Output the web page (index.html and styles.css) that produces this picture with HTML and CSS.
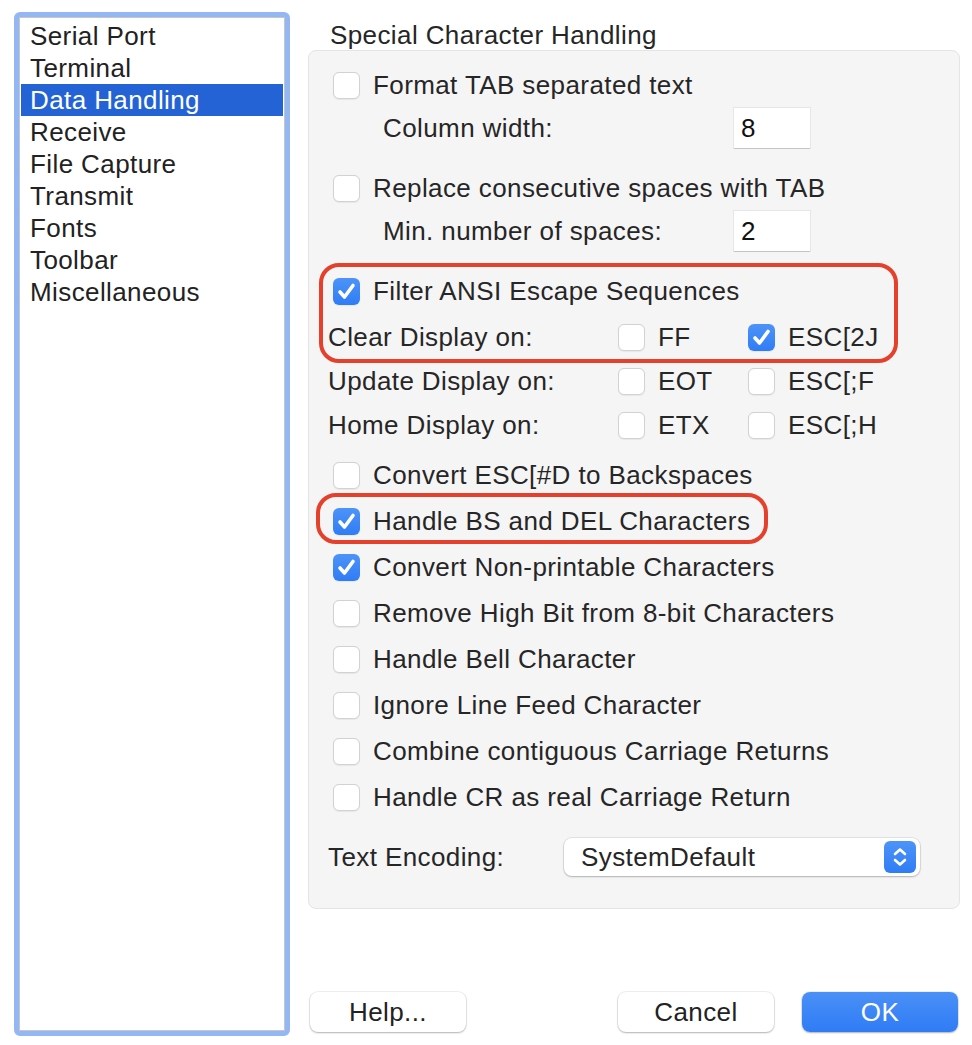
FILE: index.html
```html
<!DOCTYPE html>
<html lang="en">
<head>
    <meta charset="UTF-8">
    <meta name="viewport" content="width=device-width, initial-scale=1.0">
    <title>Settings - Data Handling</title>
    <link rel="stylesheet" href="styles.css">
</head>
<body>

<div class="window">
    <!-- Category list on the left -->
    <div class="category-list">
        <ul>
            <li>Serial Port</li>
            <li>Terminal</li>
            <li class="selected">Data Handling</li>
            <li>Receive</li>
            <li>File Capture</li>
            <li>Transmit</li>
            <li>Fonts</li>
            <li>Toolbar</li>
            <li>Miscellaneous</li>
        </ul>
    </div>

    <!-- Settings for the selected category -->
    <div class="settings">
        <div class="section-title">Special Character Handling</div>

        <div class="panel">
            <div class="row">
                <span class="checkbox"></span>
                <span class="label">Format TAB separated text</span>
            </div>
            <div class="row field-row">
                <span class="field-label">Column width:</span>
                <span class="text-field">8</span>
            </div>

            <div class="row group-start">
                <span class="checkbox"></span>
                <span class="label">Replace consecutive spaces with TAB</span>
            </div>
            <div class="row field-row">
                <span class="field-label">Min. number of spaces:</span>
                <span class="text-field">2</span>
            </div>

            <div class="row group-start">
                <span class="checkbox checked"><svg viewBox="0 0 27 27"><path d="M7 14 L11.5 19 L20 7.5"/></svg></span>
                <span class="label">Filter ANSI Escape Sequences</span>
            </div>
            <div class="row display-row first-display">
                <span class="display-label">Clear Display on:</span>
                <span class="option"><span class="checkbox"></span>FF</span>
                <span class="option"><span class="checkbox checked"><svg viewBox="0 0 27 27"><path d="M7 14 L11.5 19 L20 7.5"/></svg></span>ESC[2J</span>
            </div>
            <div class="row display-row">
                <span class="display-label">Update Display on:</span>
                <span class="option"><span class="checkbox"></span>EOT</span>
                <span class="option"><span class="checkbox"></span>ESC[;F</span>
            </div>
            <div class="row display-row">
                <span class="display-label">Home Display on:</span>
                <span class="option"><span class="checkbox"></span>ETX</span>
                <span class="option"><span class="checkbox"></span>ESC[;H</span>
            </div>

            <div class="row after-display">
                <span class="checkbox"></span>
                <span class="label">Convert ESC[#D to Backspaces</span>
            </div>
            <div class="row">
                <span class="checkbox checked"><svg viewBox="0 0 27 27"><path d="M7 14 L11.5 19 L20 7.5"/></svg></span>
                <span class="label">Handle BS and DEL Characters</span>
            </div>
            <div class="row">
                <span class="checkbox checked"><svg viewBox="0 0 27 27"><path d="M7 14 L11.5 19 L20 7.5"/></svg></span>
                <span class="label">Convert Non-printable Characters</span>
            </div>
            <div class="row">
                <span class="checkbox"></span>
                <span class="label">Remove High Bit from 8-bit Characters</span>
            </div>
            <div class="row">
                <span class="checkbox"></span>
                <span class="label">Handle Bell Character</span>
            </div>
            <div class="row">
                <span class="checkbox"></span>
                <span class="label">Ignore Line Feed Character</span>
            </div>
            <div class="row">
                <span class="checkbox"></span>
                <span class="label">Combine contiguous Carriage Returns</span>
            </div>
            <div class="row">
                <span class="checkbox"></span>
                <span class="label">Handle CR as real Carriage Return</span>
            </div>

            <div class="row group-start">
                <span class="display-label encoding-label">Text Encoding:</span>
                <div class="popup">
                    <span>SystemDefault</span>
                    <span class="stepper">
                        <svg viewBox="0 0 32 32"><path d="M11 13 L16 8.5 L21 13 M11 19 L16 23.5 L21 19"/></svg>
                    </span>
                </div>
            </div>

            <!-- red outlines drawn over the options -->
            <div class="callout callout-ansi"></div>
            <div class="callout callout-bs"></div>
        </div>

        <div class="buttons">
            <button class="btn">Help...</button>
            <div class="btn-group">
                <button class="btn">Cancel</button>
                <button class="btn btn-default">OK</button>
            </div>
        </div>
    </div>
</div>

</body>
</html>
```

FILE: styles.css
```css
body {
    margin: 0;
    padding: 0;
    background-color: #fff;
    font-family: "Liberation Sans", Arial, sans-serif;
    font-size: 26px;
    letter-spacing: 0.4px;
    color: #262626;
}
.window {
    display: flex;
    gap: 18px;
    height: 1045px;
    box-sizing: border-box;
    padding: 12px 12px 9px 14px;
}

/* category list */
.category-list {
    width: 276px;
    flex-shrink: 0;
    border: 5px solid #93b6f5;
    border-radius: 6px;
    box-sizing: border-box;
}
.category-list ul {
    list-style: none;
    margin: 0;
    padding: 2px 0 0 0;
    height: 100%;
    box-sizing: border-box;
    border: 1px solid #c6c6c6;
    background-color: #fff;
}
.category-list li {
    height: 32px;
    line-height: 33px;
    margin: 0 1px;
    padding-left: 9px;
    color: #222;
}
.category-list li.selected {
    background-color: #2463d5;
    color: #fff;
}

/* right side */
.settings {
    flex: 1;
    display: flex;
    flex-direction: column;
}
.section-title {
    margin: 8px 0 0 22px;
    height: 30px;
    line-height: 30px;
}
.panel {
    position: relative;
    height: 859px;
    box-sizing: border-box;
    padding: 14px 0 0 24px;
    background-color: #f5f5f5;
    border: 1px solid #e4e4e4;
    border-radius: 8px;
}
.row {
    display: flex;
    align-items: center;
    height: 40px;
    margin-top: 6px;
}
.panel .row:first-child {
    margin-top: 0;
}
.row.field-row {
    margin-top: 3px;
}
.row.group-start {
    margin-top: 20px;
}
.row.display-row {
    margin-top: 4px;
}
.row.first-display {
    margin-top: 6px;
}
.row.after-display {
    margin-top: 10px;
}
.label {
    margin-left: 13px;
}

/* checkboxes */
.checkbox {
    display: inline-block;
    width: 27px;
    height: 27px;
    flex-shrink: 0;
    box-sizing: border-box;
    background-color: #fff;
    border: 1px solid #d2d2d2;
    border-radius: 6px;
    box-shadow: 0 0.5px 1px rgba(0, 0, 0, 0.06);
}
.checkbox.checked {
    border: none;
    background: linear-gradient(#4d93f8, #2f7cf5);
}
.checkbox svg {
    display: block;
    width: 27px;
    height: 27px;
}
.checkbox svg path {
    fill: none;
    stroke: #fff;
    stroke-width: 3.6;
    stroke-linecap: round;
    stroke-linejoin: round;
}

/* label + number field rows */
.field-label {
    width: 351px;
    padding-left: 50px;
}
.text-field {
    width: 76px;
    height: 40px;
    line-height: 40px;
    box-sizing: border-box;
    padding-left: 7px;
    background-color: #fff;
    color: #111;
    box-shadow: 0 1px 0 #c4c4c4, 0 0 0 1px #e6e6e6;
}

/* "Display on" rows */
.display-label {
    width: 290px;
    margin-left: -5px;
    flex-shrink: 0;
}
.option {
    display: flex;
    align-items: center;
    gap: 13px;
    width: 130px;
}

/* text encoding popup */
.encoding-label {
    width: 236px;
}
.popup {
    display: flex;
    align-items: center;
    justify-content: space-between;
    width: 356px;
    height: 38px;
    box-sizing: border-box;
    padding: 0 4px 0 17px;
    background-color: #fff;
    border-radius: 8px;
    box-shadow: 0 0 0 1px rgba(0, 0, 0, 0.07), 0 1px 2px rgba(0, 0, 0, 0.22);
}
.stepper {
    width: 32px;
    height: 32px;
    border-radius: 6px;
    background: linear-gradient(#4d93f8, #2f7cf5);
}
.stepper svg {
    display: block;
    width: 32px;
    height: 32px;
}
.stepper svg path {
    fill: none;
    stroke: #fff;
    stroke-width: 2.6;
    stroke-linecap: round;
    stroke-linejoin: round;
}

/* red highlight outlines */
.callout {
    position: absolute;
    box-sizing: border-box;
    border: 4px solid #e4402b;
    border-radius: 20px;
    pointer-events: none;
}
.callout-ansi {
    left: 10px;
    top: 212px;
    width: 579px;
    height: 100px;
}
.callout-bs {
    left: 7px;
    top: 442px;
    width: 452px;
    height: 51px;
}

/* bottom buttons */
.buttons {
    display: flex;
    justify-content: space-between;
    margin: auto 2px 4px 2px;
}
.btn-group {
    display: flex;
    gap: 28px;
}
.btn {
    width: 156px;
    height: 40px;
    font-family: inherit;
    font-size: 26px;
    letter-spacing: 0.4px;
    color: #222;
    background-color: #fff;
    border: none;
    border-radius: 8px;
    box-shadow: 0 0 0 1px rgba(0, 0, 0, 0.06), 0 1px 2px rgba(0, 0, 0, 0.25);
    cursor: pointer;
}
.btn-default {
    color: #fff;
    background: linear-gradient(#4a90f7, #2f7cf5);
}
```
